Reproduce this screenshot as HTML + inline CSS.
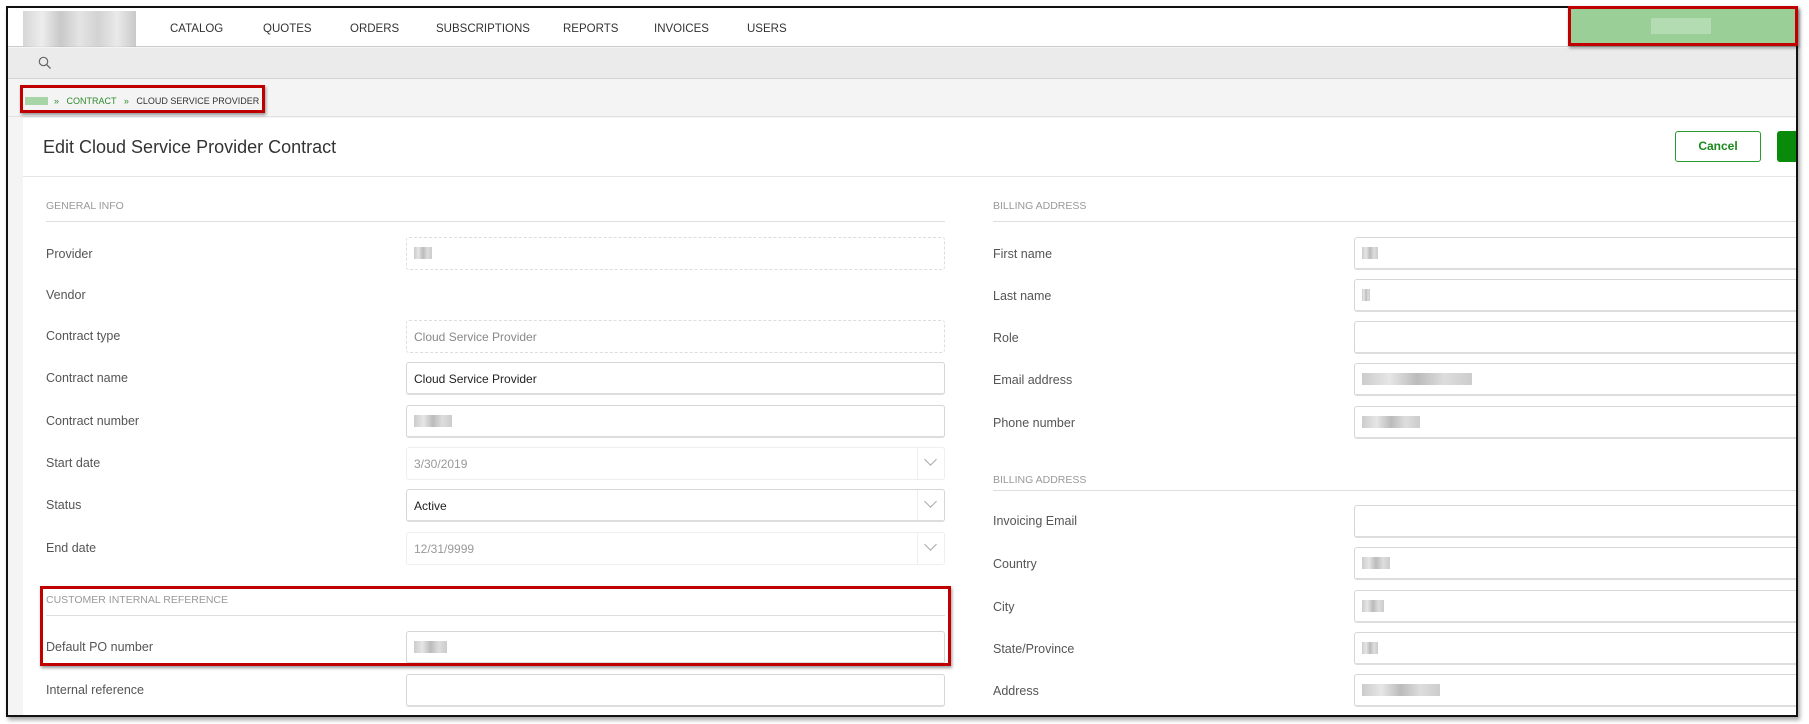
<!DOCTYPE html>
<html><head><meta charset="utf-8"><style>
*{box-sizing:border-box;margin:0;padding:0}
body{width:1809px;height:724px;background:#fff;font-family:"Liberation Sans",sans-serif;position:relative;overflow:hidden}
.frame{position:absolute;left:6px;top:6px;width:1792px;height:711px;border:2px solid #111;overflow:hidden;background:#f4f4f4;box-shadow:2px 3px 4px rgba(0,0,0,.35)}
.a{position:absolute}
.nav{font-size:11.5px;color:#333;top:15px}
.lbl{position:absolute;font-size:12.5px;color:#555}
.sec{position:absolute;font-size:10.5px;color:#999;text-transform:uppercase}
.line{position:absolute;height:1px;background:#ddd}
.in{position:absolute;height:33px;border:1px solid #d6d6d6;border-bottom:2px solid #ddd;border-radius:3px;background:#fff;font-size:12px;color:#222;padding:9px 7px}
.dis{border:1px dashed #ddd;color:#888}
.ro{border:1px solid #eee;color:#999}
.blur{display:inline-block;height:12px;background:linear-gradient(90deg,#ccc,#e6e6e6,#bbb,#ddd,#ccc)}
.chev{position:absolute;right:0;top:0;width:27px;height:100%;border-left:1px solid #eee}
.chev:after{content:"";position:absolute;left:8px;top:7px;width:8px;height:8px;border-right:1px solid #aaa;border-bottom:1px solid #aaa;transform:rotate(45deg)}
.red{position:absolute;border:3px solid #c00000;box-shadow:1px 2px 3px rgba(0,0,0,.4)}
</style></head><body>
<div class="frame">
 <div class="a" style="left:0;top:0;width:1790px;height:39px;background:#fff;border-bottom:1px solid #ccc"></div>
 <div class="a" style="left:15px;top:3px;width:113px;height:36px;background:linear-gradient(90deg,#ccc,#e8e8e8,#bbb,#ddd,#c8c8c8,#e4e4e4,#bbb);opacity:.8"></div>
 <div class="a nav" style="left:162px">CATALOG</div>
 <div class="a nav" style="left:255px">QUOTES</div>
 <div class="a nav" style="left:342px">ORDERS</div>
 <div class="a nav" style="left:428px">SUBSCRIPTIONS</div>
 <div class="a nav" style="left:555px">REPORTS</div>
 <div class="a nav" style="left:646px">INVOICES</div>
 <div class="a nav" style="left:739px">USERS</div>
 <div class="a" style="left:0;top:40px;width:1790px;height:31px;background:#ebebeb;border-bottom:1px solid #d4d4d4"></div>
 <svg class="a" style="left:30px;top:48px" width="14" height="14" viewBox="0 0 14 14"><circle cx="5.5" cy="5.5" r="4.2" fill="none" stroke="#666" stroke-width="1.2"/><path d="M8.6 8.6L12.5 12.5" stroke="#666" stroke-width="1.3"/></svg>
 <div class="a" style="left:0;top:72px;width:1790px;height:37px;background:#f4f4f4;border-bottom:1px solid #e2e2e2"></div>
 <div class="a" style="left:17px;top:89px;width:23px;height:8px;background:#a8d5a8"></div>
 <div class="a" style="left:46px;top:88px;font-size:9px;color:#2e8b2e">&#187;&nbsp;&nbsp; CONTRACT &nbsp;&nbsp;<span style="color:#2e8b2e">&#187;</span>&nbsp;&nbsp; <span style="color:#333">CLOUD SERVICE PROVIDER</span></div>
 <div class="a" style="left:15px;top:110px;width:1780px;height:610px;background:#fff"></div>
 <div class="line" style="left:15px;top:168px;width:1780px;background:#e6e6e6"></div>
 <div class="a" style="left:35px;top:129px;font-size:18px;color:#333">Edit Cloud Service Provider Contract</div>
 <div class="a" style="left:1667px;top:123px;width:86px;height:31px;border:1px solid #2a9a2a;border-radius:3px;color:#1a8a1a;font-size:12px;font-weight:bold;text-align:center;line-height:29px">Cancel</div>
 <div class="a" style="left:1769px;top:123px;width:30px;height:31px;background:#0a8a0a;border-radius:3px"></div>

 <div class="sec" style="left:38px;top:192px">General Info</div>
 <div class="line" style="left:38px;top:213px;width:899px"></div>
 <div class="lbl" style="left:38px;top:239px">Provider</div>
 <div class="in dis" style="left:398px;top:229px;width:539px"><span class="blur" style="width:18px"></span></div>
 <div class="lbl" style="left:38px;top:280px">Vendor</div>
 <div class="lbl" style="left:38px;top:321px">Contract type</div>
 <div class="in dis" style="left:398px;top:312px;width:539px">Cloud Service Provider</div>
 <div class="lbl" style="left:38px;top:363px">Contract name</div>
 <div class="in" style="left:398px;top:354px;width:539px">Cloud Service Provider</div>
 <div class="lbl" style="left:38px;top:406px">Contract number</div>
 <div class="in" style="left:398px;top:397px;width:539px"><span class="blur" style="width:38px"></span></div>
 <div class="lbl" style="left:38px;top:448px">Start date</div>
 <div class="in ro" style="left:398px;top:439px;width:539px">3/30/2019<span class="chev"></span></div>
 <div class="lbl" style="left:38px;top:490px">Status</div>
 <div class="in" style="left:398px;top:481px;width:539px">Active<span class="chev"></span></div>
 <div class="lbl" style="left:38px;top:533px">End date</div>
 <div class="in ro" style="left:398px;top:524px;width:539px">12/31/9999<span class="chev"></span></div>
 <div class="sec" style="left:38px;top:586px">Customer Internal Reference</div>
 <div class="line" style="left:38px;top:607px;width:899px"></div>
 <div class="lbl" style="left:38px;top:632px">Default PO number</div>
 <div class="in" style="left:398px;top:623px;width:539px"><span class="blur" style="width:33px"></span></div>
 <div class="lbl" style="left:38px;top:675px">Internal reference</div>
 <div class="in" style="left:398px;top:666px;width:539px"></div>

 <div class="sec" style="left:985px;top:192px">Billing Address</div>
 <div class="line" style="left:985px;top:213px;width:810px"></div>
 <div class="lbl" style="left:985px;top:239px">First name</div>
 <div class="in" style="left:1346px;top:229px;width:460px"><span class="blur" style="width:16px"></span></div>
 <div class="lbl" style="left:985px;top:281px">Last name</div>
 <div class="in" style="left:1346px;top:271px;width:460px"><span class="blur" style="width:8px"></span></div>
 <div class="lbl" style="left:985px;top:323px">Role</div>
 <div class="in" style="left:1346px;top:313px;width:460px"></div>
 <div class="lbl" style="left:985px;top:365px">Email address</div>
 <div class="in" style="left:1346px;top:355px;width:460px"><span class="blur" style="width:110px"></span></div>
 <div class="lbl" style="left:985px;top:408px">Phone number</div>
 <div class="in" style="left:1346px;top:398px;width:460px"><span class="blur" style="width:58px"></span></div>
 <div class="sec" style="left:985px;top:466px">Billing Address</div>
 <div class="line" style="left:985px;top:482px;width:810px"></div>
 <div class="lbl" style="left:985px;top:506px">Invoicing Email</div>
 <div class="in" style="left:1346px;top:497px;width:460px"></div>
 <div class="lbl" style="left:985px;top:549px">Country</div>
 <div class="in" style="left:1346px;top:539px;width:460px"><span class="blur" style="width:28px"></span></div>
 <div class="lbl" style="left:985px;top:592px">City</div>
 <div class="in" style="left:1346px;top:582px;width:460px"><span class="blur" style="width:22px"></span></div>
 <div class="lbl" style="left:985px;top:634px">State/Province</div>
 <div class="in" style="left:1346px;top:624px;width:460px"><span class="blur" style="width:16px"></span></div>
 <div class="lbl" style="left:985px;top:676px">Address</div>
 <div class="in" style="left:1346px;top:666px;width:460px"><span class="blur" style="width:78px"></span></div>
</div>
<div class="red" style="left:1568px;top:6px;width:230px;height:40px;background:#9acf98"></div>
<div class="a" style="left:1651px;top:18px;width:60px;height:16px;background:#b4dcb2"></div>
<div class="red" style="left:20px;top:85px;width:245px;height:28px"></div>
<div class="red" style="left:40px;top:586px;width:911px;height:80px"></div>
</body></html>
